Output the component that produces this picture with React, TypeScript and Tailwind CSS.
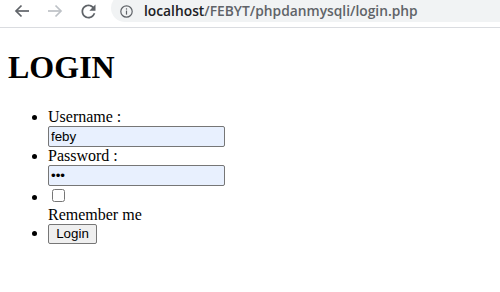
import React from 'react';

function BackIcon({ color }: { color: string }) {
  return (
    <svg width="16" height="16" viewBox="0 0 16 16" fill="none" stroke={color} strokeWidth="1.7">
      <path d="M15 8H2" />
      <path d="M7.5 2.5L2 8l5.5 5.5" />
    </svg>
  );
}

function ForwardIcon({ color }: { color: string }) {
  return (
    <svg width="16" height="16" viewBox="0 0 16 16" fill="none" stroke={color} strokeWidth="1.7">
      <path d="M1 8h13" />
      <path d="M8.5 2.5L14 8l-5.5 5.5" />
    </svg>
  );
}

function ReloadIcon() {
  return (
    <svg width="21" height="21" viewBox="0 0 24 24" fill="#5f6368">
      <path d="M17.65 6.35C16.2 4.9 14.21 4 12 4c-4.42 0-7.99 3.58-7.99 8s3.57 8 7.99 8c3.73 0 6.84-2.55 7.73-6h-2.08c-.82 2.33-3.04 4-5.65 4-3.31 0-6-2.690-6-6s2.69-6 6-6c1.66 0 3.14.69 4.22 1.78L13 11h7V4l-2.35 2.35z" />
    </svg>
  );
}

function InfoIcon() {
  return (
    <svg width="13" height="13" viewBox="0 0 13 13" fill="none">
      <circle cx="6.5" cy="6.5" r="5.7" stroke="#5f6368" strokeWidth="1.2" />
      <rect x="5.9" y="5.6" width="1.2" height="4" fill="#5f6368" />
      <rect x="5.9" y="3.3" width="1.2" height="1.3" fill="#5f6368" />
    </svg>
  );
}

export default function App() {
  return (
    <div className="min-h-[292px] bg-white text-black">
      {/* browser toolbar */}
      <div className="h-[28px] border-b border-[#dadce0] overflow-hidden">
        <div className="flex h-[22px] items-center">
          <div className="ml-[14px] flex w-[16px] justify-center">
            <BackIcon color="#5f6368" />
          </div>
          <div className="ml-[17px] flex w-[16px] justify-center">
            <ForwardIcon color="#bdc1c6" />
          </div>
          <div className="ml-[15px] flex w-[21px] justify-center">
            <ReloadIcon />
          </div>
          <div className="ml-[12px] -mt-[6px] flex h-[28px] w-[420px] shrink-0 items-center rounded-[14px] bg-[#f1f3f4] pt-[6px]">
            <div className="ml-[9px]">
              <InfoIcon />
            </div>
            <div className="ml-[11px] font-['Open_Sans',sans-serif] text-[13.8px] font-semibold whitespace-nowrap">
              <span className="text-[#202124]">localhost</span>
              <span className="text-[#5f6368]">/FEBYT/phpdanmysqli/login.php</span>
            </div>
          </div>
        </div>
      </div>

      {/* page */}
      <div className="px-2 font-['Liberation_Serif','Times_New_Roman',serif] text-[16px] leading-[normal]">
        <h1 className="my-[21.44px] text-[32px] font-bold leading-[normal]">LOGIN</h1>
        <ul className="list-disc pl-10">
          <li>
            Username :
            <br />
            <input
              type="text"
              defaultValue="feby"
              className="h-[21px] w-[177px] rounded-[2px] border border-[#767676] bg-[#e8f0fe] px-[2px] py-[1px] font-['Liberation_Sans',Arial,sans-serif] text-[13.33px] text-black"
            />
          </li>
          <li>
            Password :
            <br />
            <input
              type="password"
              defaultValue="abc"
              className="h-[21px] w-[177px] rounded-[2px] border border-[#767676] bg-[#e8f0fe] px-[2px] py-[1px] font-['Liberation_Sans',Arial,sans-serif] text-[13.33px] text-black"
            />
          </li>
          <li>
            <input type="checkbox" className="m-[3px_3px_3px_4px] h-[13px] w-[13px]" />
            <br />
            Remember me
          </li>
          <li>
            <button className="h-[20px] w-[49px] rounded-[2px] border border-[#767676] bg-[#efefef] font-['Liberation_Sans',Arial,sans-serif] text-[13.33px] text-black">
              Login
            </button>
          </li>
        </ul>
      </div>
    </div>
  );
}
